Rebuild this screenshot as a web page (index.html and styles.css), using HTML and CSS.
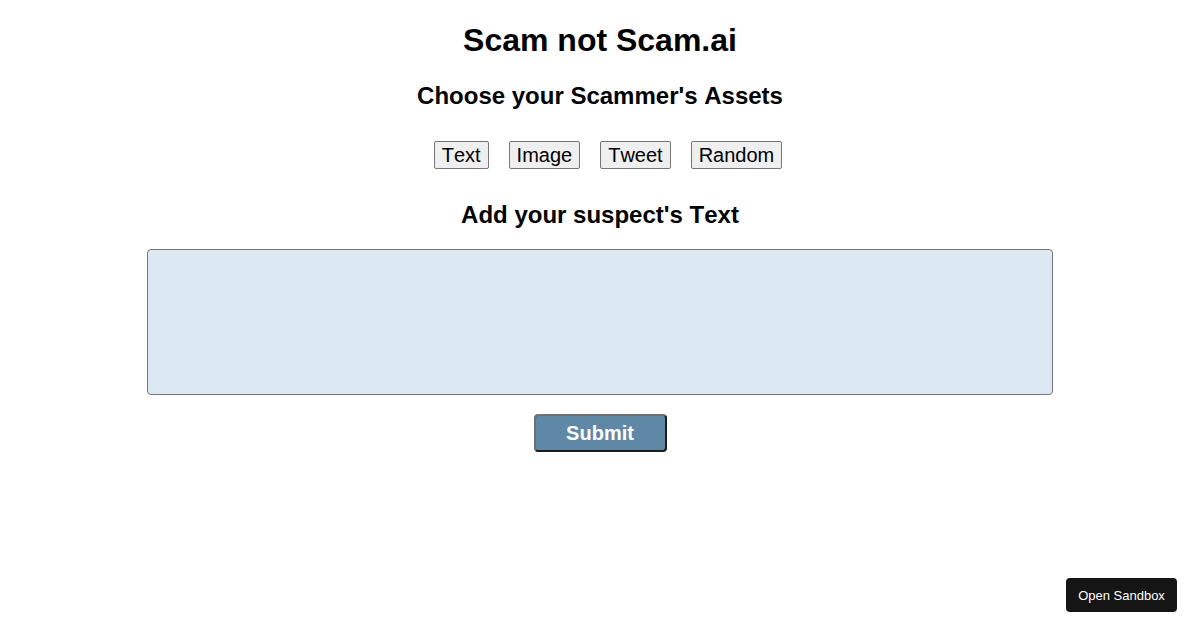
FILE: index.html
```html
<!DOCTYPE html>
<html>
<head>
<meta charset="utf-8">
<link rel="stylesheet" href="styles.css">
</head>
<body>
<main class="app">
  <h1 class="title">Scam not Scam.ai</h1>
  <h2 class="subtitle">Choose your Scammer's Assets</h2>
  <div class="choices">
    <button class="choice">Text</button>
    <button class="choice">Image</button>
    <button class="choice">Tweet</button>
    <button class="choice">Random</button>
  </div>
  <h2 class="subtitle second">Add your suspect's Text</h2>
  <textarea class="input"></textarea>
  <button class="submit">Submit</button>
</main>
<button class="sandbox">Open Sandbox</button>
</body>
</html>
```
FILE: styles.css
```css
html, body {
  margin: 0;
  padding: 0;
  background: #ffffff;
  font-family: "Liberation Sans", Arial, sans-serif;
  font-kerning: none;
  color: #000;
}
.app {
  display: flex;
  flex-direction: column;
  align-items: center;
  padding-top: 22px;
}
.title {
  font-size: 32px;
  font-weight: bold;
  margin: 0;
  line-height: 37px;
}
.subtitle {
  font-size: 24px;
  margin: 23px 0 0;
  line-height: 28px;
}
.choices {
  display: flex;
  gap: 20px;
  margin-top: 31px;
  padding-left: 16px;
}
.choice {
  font-family: "Liberation Sans", Arial, sans-serif;
  font-kerning: none;
  font-size: 20px;
  padding: 0 7px;
  background: #efefef;
  border: 1px solid #767676;
  border-radius: 2px;
  color: #000;
  height: 28px;
  line-height: 24px;
}
.second {
  margin-top: 32px;
}
.input {
  margin-top: 20px;
  width: 906px;
  height: 146px;
  box-sizing: border-box;
  background: #dce8f2;
  border: 1px solid #767676;
  border-radius: 4px;
  resize: none;
}
.submit {
  margin-top: 19px;
  width: 133px;
  height: 38px;
  box-sizing: border-box;
  background: #5f87a6;
  color: #fff;
  font-family: "Liberation Sans", Arial, sans-serif;
  font-kerning: none;
  font-size: 20px;
  font-weight: bold;
  border-style: solid;
  border-width: 2px;
  border-color: #707070 #1c1c1c #1c1c1c #707070;
  border-radius: 4px;
  padding: 0;
}
.sandbox {
  position: fixed;
  right: 23px;
  bottom: 18px;
  width: 111px;
  height: 34px;
  background: #151515;
  color: #fff;
  border: none;
  border-radius: 4px;
  font-family: "Liberation Sans", Arial, sans-serif;
  font-size: 13px;
}
```
